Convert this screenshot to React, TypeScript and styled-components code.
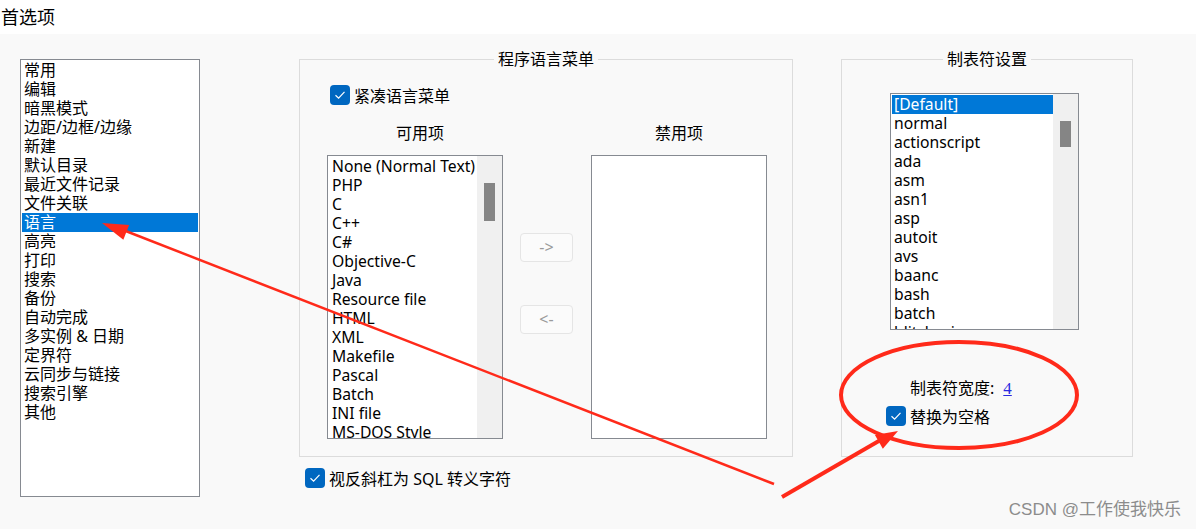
import React from "react";
import styled, { createGlobalStyle } from "styled-components";

const GlobalStyle = createGlobalStyle`
    html, body {
        margin: 0;
        padding: 0;
        background: #f9f9f9;
    }
    body {
        font-family: "Noto Sans", "Noto Sans CJK SC", sans-serif;
        color: #000;
    }
`;

const categories = [
    "常用",
    "编辑",
    "暗黑模式",
    "边距/边框/边缘",
    "新建",
    "默认目录",
    "最近文件记录",
    "文件关联",
    "语言",
    "高亮",
    "打印",
    "搜索",
    "备份",
    "自动完成",
    "多实例 & 日期",
    "定界符",
    "云同步与链接",
    "搜索引擎",
    "其他",
];

const languages = [
    "None (Normal Text)",
    "PHP",
    "C",
    "C++",
    "C#",
    "Objective-C",
    "Java",
    "Resource file",
    "HTML",
    "XML",
    "Makefile",
    "Pascal",
    "Batch",
    "INI file",
    "MS-DOS Style",
];

const tabLangs = [
    "[Default]",
    "normal",
    "actionscript",
    "ada",
    "asm",
    "asn1",
    "asp",
    "autoit",
    "avs",
    "baanc",
    "bash",
    "batch",
    "blitzbasic",
];

const Page = styled.div`
    position: relative;
    width: 1196px;
    height: 529px;
    overflow: hidden;
    background: #f9f9f9;
`;

const TitleBar = styled.div`
    height: 34px;
    background: #fff;
    font-size: 18px;
    line-height: 34px;
    padding-left: 1px;
`;

const Content = styled.div`
    display: flex;
    align-items: flex-start;
    padding: 25px 0 0 20px;
`;

const ListBox = styled.div<{ w: number; h: number }>`
    position: relative;
    box-sizing: border-box;
    width: ${(p) => p.w}px;
    height: ${(p) => p.h}px;
    border: 1px solid #868a91;
    background: #fff;
    padding: 1px;
    overflow: hidden;
    display: flex;
`;

const Items = styled.div`
    flex: 1;
    min-width: 0;
`;

const Item = styled.div<{ selected?: boolean; pad?: number }>`
    height: 19px;
    line-height: 19px;
    font-size: 16px;
    padding-left: ${(p) => p.pad ?? 2}px;
    white-space: nowrap;
    background: ${(p) => (p.selected ? "#0078d7" : "transparent")};
    color: ${(p) => (p.selected ? "#fff" : "#000")};
`;

const LatinItem = styled(Item)`
    font-size: 15.7px;
`;

const ScrollTrack = styled.div`
    width: 25px;
    margin: -1px -1px -1px 0;
    background: #f0f0f0;
    padding-left: 7px;
    box-sizing: border-box;
`;

const ScrollThumb = styled.div<{ top: number; h: number }>`
    width: 11px;
    height: ${(p) => p.h}px;
    margin-top: ${(p) => p.top}px;
    background: #858585;
`;

const GroupBox = styled.div<{ w: number; ml: number }>`
    position: relative;
    box-sizing: border-box;
    width: ${(p) => p.w}px;
    height: 398px;
    margin-left: ${(p) => p.ml}px;
    border: 1px solid #dcdcdc;
`;

const GroupTitle = styled.div`
    position: absolute;
    top: -11px;
    left: 0;
    right: 0;
    text-align: center;
    font-size: 16px;
    line-height: 20px;

    span {
        background: #f9f9f9;
        padding: 0 4px;
    }
`;

const MiddleColumn = styled.div`
    display: flex;
    flex-direction: column;
    margin-left: 99px;
`;

const MiddleInner = styled.div`
    padding: 25px 0 0 27px;
`;

const CheckRow = styled.label<{ ml?: number; mt?: number }>`
    display: flex;
    align-items: center;
    gap: 4px;
    height: 20px;
    margin-left: ${(p) => p.ml ?? 0}px;
    margin-top: ${(p) => p.mt ?? 0}px;
    font-size: 16px;
    white-space: nowrap;
`;

const CheckBox = styled.span`
    width: 20px;
    height: 20px;
    border-radius: 4px;
    background: #0067c0;
    display: flex;
    align-items: center;
    justify-content: center;
    flex-shrink: 0;
`;

const ListsRow = styled.div`
    display: flex;
    align-items: flex-start;
    margin-top: 17px;
`;

const ListColumn = styled.div`
    display: flex;
    flex-direction: column;
    align-items: center;
`;

const ColumnTitle = styled.div<{ shift?: number }>`
    height: 22px;
    line-height: 22px;
    font-size: 16px;
    margin-bottom: 11px;
    margin-left: ${(p) => p.shift ?? 0}px;
`;

const MoveButtons = styled.div`
    display: flex;
    flex-direction: column;
    gap: 43px;
    margin: 111px 18px 0 17px;
`;

const MoveButton = styled.div`
    box-sizing: border-box;
    width: 53px;
    height: 29px;
    border: 1px solid #e5e5e5;
    border-radius: 4px;
    background: #fbfbfb;
    color: #9a9a9a;
    font-size: 16px;
    line-height: 26px;
    text-align: center;
`;

const RightInner = styled.div`
    padding: 33px 0 0 48px;
`;

const WidthLabel = styled.div`
    margin: 47px 0 0 20px;
    height: 22px;
    line-height: 22px;
    font-size: 16px;
`;

const NumLink = styled.span`
    font-family: "Liberation Serif", serif;
    font-size: 17px;
    color: #2a2ae0;
    text-decoration: underline;
    margin-left: 9px;
`;

const Watermark = styled.div`
    position: absolute;
    right: 15px;
    bottom: 9px;
    font-size: 17px;
    color: #8c8c8c;
    font-family: "Liberation Sans", "Noto Sans CJK SC", sans-serif;
`;

const Overlay = styled.svg`
    position: absolute;
    left: 0;
    top: 0;
    pointer-events: none;
`;

const Check = () => (
    <CheckBox>
        <svg width="12" height="10" viewBox="0 0 12 10">
            <path d="M1.5 5.2 L4.6 8.2 L10.5 1.8" fill="none" stroke="#fff" strokeWidth="1.2" />
        </svg>
    </CheckBox>
);

// arrowhead polygon pointing at (tx, ty), coming from (fx, fy)
const head = (tx: number, ty: number, fx: number, fy: number, len: number, half: number) => {
    const dx = fx - tx;
    const dy = fy - ty;
    const d = Math.hypot(dx, dy);
    const ux = dx / d;
    const uy = dy / d;
    const bx = tx + ux * len;
    const by = ty + uy * len;
    return `${tx},${ty} ${bx - uy * half},${by + ux * half} ${bx + uy * half},${by - ux * half}`;
};

const Annotations = () => (
    <Overlay width="1196" height="529" viewBox="0 0 1196 529">
        <line x1="774" y1="484" x2="118" y2="228" stroke="#ff2a1a" strokeWidth="2.5" />
        <polygon points={head(102, 223, 774, 484, 26, 8)} fill="#ff2a1a" />
        <line x1="782" y1="497" x2="884" y2="438" stroke="#ff2a1a" strokeWidth="4" />
        <polygon points={head(898, 431, 782, 497, 22, 8)} fill="#ff2a1a" />
        <ellipse cx="959" cy="395" rx="118" ry="53" fill="none" stroke="#ff2a1a" strokeWidth="4" />
    </Overlay>
);

export default function App() {
    return (
        <Page>
            <GlobalStyle />
            <TitleBar>首选项</TitleBar>
            <Content>
                <ListBox w={180} h={438}>
                    <Items>
                        {categories.map((c) => (
                            <Item key={c} selected={c === "语言"}>
                                {c}
                            </Item>
                        ))}
                    </Items>
                </ListBox>

                <MiddleColumn>
                    <GroupBox w={494} ml={0}>
                        <GroupTitle>
                            <span>程序语言菜单</span>
                        </GroupTitle>
                        <MiddleInner>
                            <CheckRow ml={3}>
                                <Check />
                                紧凑语言菜单
                            </CheckRow>
                            <ListsRow>
                                <ListColumn>
                                    <ColumnTitle shift={10}>可用项</ColumnTitle>
                                    <ListBox w={176} h={284}>
                                        <Items>
                                            {languages.map((l) => (
                                                <LatinItem key={l} pad={3}>
                                                    {l}
                                                </LatinItem>
                                            ))}
                                        </Items>
                                        <ScrollTrack>
                                            <ScrollThumb top={27} h={38} />
                                        </ScrollTrack>
                                    </ListBox>
                                </ListColumn>
                                <MoveButtons>
                                    <MoveButton>-&gt;</MoveButton>
                                    <MoveButton>&lt;-</MoveButton>
                                </MoveButtons>
                                <ListColumn>
                                    <ColumnTitle>禁用项</ColumnTitle>
                                    <ListBox w={176} h={284} />
                                </ListColumn>
                            </ListsRow>
                        </MiddleInner>
                    </GroupBox>
                    <CheckRow ml={6} mt={11}>
                        <Check />
                        视反斜杠为 SQL 转义字符
                    </CheckRow>
                </MiddleColumn>

                <GroupBox w={292} ml={48}>
                    <GroupTitle>
                        <span>制表符设置</span>
                    </GroupTitle>
                    <RightInner>
                        <ListBox w={189} h={237}>
                            <Items>
                                {tabLangs.map((t, i) => (
                                    <LatinItem key={t} selected={i === 0}>
                                        {t}
                                    </LatinItem>
                                ))}
                            </Items>
                            <ScrollTrack>
                                <ScrollThumb top={27} h={26} />
                            </ScrollTrack>
                        </ListBox>
                        <WidthLabel>
                            制表符宽度:
                            <NumLink>4</NumLink>
                        </WidthLabel>
                        <CheckRow mt={7} ml={-4}>
                            <Check />
                            替换为空格
                        </CheckRow>
                    </RightInner>
                </GroupBox>
            </Content>
            <Watermark>CSDN @工作使我快乐</Watermark>
            <Annotations />
        </Page>
    );
}
